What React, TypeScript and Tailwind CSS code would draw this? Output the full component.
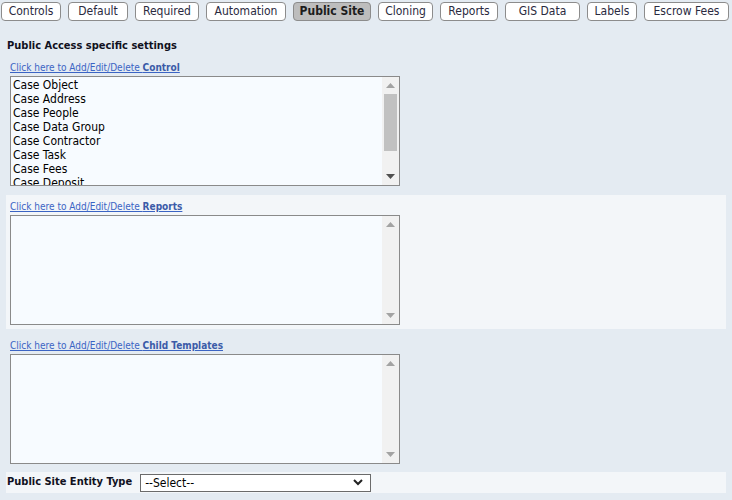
import React from 'react';

const tabs = [
    { label: 'Controls', w: 'w-[60px]' },
    { label: 'Default', w: 'w-[60px]' },
    { label: 'Required', w: 'w-[64px]' },
    { label: 'Automation', w: 'w-[80px]' },
    { label: 'Public Site', w: 'w-[78px]', active: true },
    { label: 'Cloning', w: 'w-[55px]' },
    { label: 'Reports', w: 'w-[58px]' },
    { label: 'GIS Data', w: 'w-[75px]' },
    { label: 'Labels', w: 'w-[50px]' },
    { label: 'Escrow Fees', w: 'w-[85px]' },
];

const controls = [
    'Case Object',
    'Case Address',
    'Case People',
    'Case Data Group',
    'Case Contractor',
    'Case Task',
    'Case Fees',
    'Case Deposit',
];

function Arrow({ up, dark }: { up?: boolean; dark?: boolean }) {
    return (
        <svg width="9" height="5" viewBox="0 0 9 5" className={dark ? 'fill-[#505050]' : 'fill-[#a3a3a3]'}>
            {up ? <polygon points="0,5 9,5 4.5,0" /> : <polygon points="0,0 9,0 4.5,5" />}
        </svg>
    );
}

function ListBox({ items, scroll }: { items: string[]; scroll?: boolean }) {
    return (
        <div className="flex h-[110px] w-[390px] overflow-hidden border border-[#8a8a8a] bg-[#f7fbff]">
            <div className="flex-1 overflow-hidden pl-[2px] pt-[1px] text-[12px] leading-[14px] text-black">
                {items.map((it) => (
                    <div key={it}>{it}</div>
                ))}
            </div>
            <div className="flex w-[17px] flex-col items-center bg-[#f1f1f1]">
                <div className="flex h-[17px] items-center justify-center">
                    <Arrow up />
                </div>
                <div className="flex-1 w-full px-[2px]">
                    {scroll && <div className="h-[57px] w-full bg-[#c1c1c1]" />}
                </div>
                <div className="flex h-[17px] items-center justify-center">
                    <Arrow dark={scroll} />
                </div>
            </div>
        </div>
    );
}

function EditLink({ what }: { what: string }) {
    return (
        <div className="h-[14px] text-[10px] leading-[12px] text-[#3b64c4] underline">
            Click here to Add/Edit/Delete <span className="font-bold text-[#3b5ba8]">{what}</span>
        </div>
    );
}

export default function App() {
    return (
        <div
            className="h-[500px] w-[732px] overflow-hidden bg-[#e4ebf2]"
            style={{ fontFamily: '"DejaVu Sans Condensed", "DejaVu Sans", sans-serif' }}
        >
            {/* Tab buttons */}
            <div className="flex gap-[7px] pl-[1px] pt-[2px]">
                {tabs.map((t) => (
                    <button
                        key={t.label}
                        className={`${t.w} h-[19px] rounded-[4px] border border-[#8c8c8c] text-[12px] leading-[17px] ${
                            t.active ? 'bg-[#bdbdbd] font-bold text-[#1c1c1c]' : 'bg-white text-[#2a2a40]'
                        }`}
                    >
                        {t.label}
                    </button>
                ))}
            </div>

            <div className="ml-[6px] w-[720px]">
                {/* Header */}
                <div className="mt-[17px] h-[16px] pl-[1px] text-[11px] font-bold leading-[16px] text-[#101020]">
                    Public Access specific settings
                </div>

                {/* Controls */}
                <div className="mt-[2px] px-[4px] pb-[4px] pt-[6px]">
                    <EditLink what="Control" />
                    <ListBox items={controls} scroll />
                </div>

                {/* Reports */}
                <div className="mt-[5px] bg-[#f3f6f9] px-[4px] pb-[4px] pt-[6px]">
                    <EditLink what="Reports" />
                    <ListBox items={[]} />
                </div>

                {/* Child templates */}
                <div className="mt-[5px] px-[4px] pb-[4px] pt-[6px]">
                    <EditLink what="Child Templates" />
                    <ListBox items={[]} />
                </div>

                {/* Entity type */}
                <div className="mt-[4px] flex h-[21px] items-center gap-[8px] bg-[#f3f6f9] pl-[1px]">
                    <span className="text-[11px] font-bold text-[#101020]">Public Site Entity Type</span>
                    <div className="flex h-[18px] w-[231px] items-center justify-between border border-[#6b6b6b] bg-white pl-[4px] pr-[7px] text-[12px] text-black">
                        <span>--Select--</span>
                        <svg width="10" height="7" viewBox="0 0 10 7" className="stroke-[#222]" fill="none" strokeWidth="2">
                            <polyline points="1,1 5,5 9,1" />
                        </svg>
                    </div>
                </div>
            </div>
        </div>
    );
}
